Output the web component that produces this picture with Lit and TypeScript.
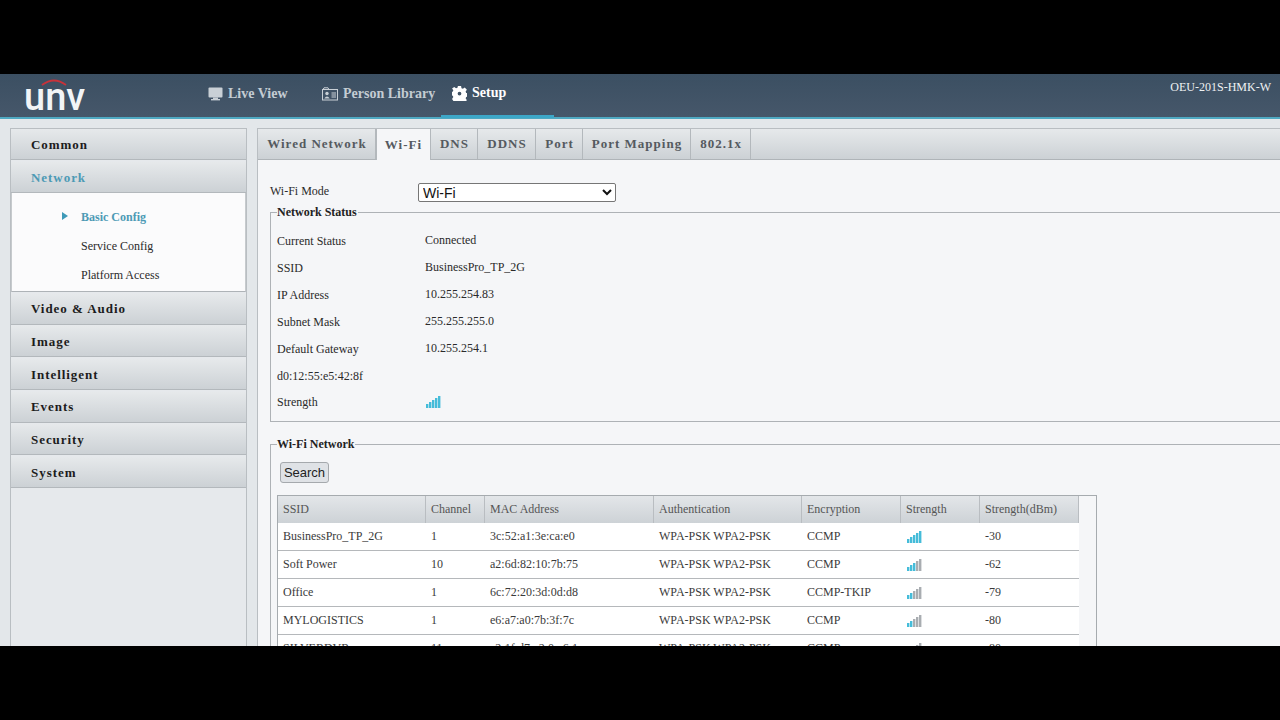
import { LitElement, html, css, svg } from "lit";
import { customElement } from "lit/decorators.js";

const SIDE_TOP = ["Common", "Network"];
const SIDE_BOTTOM = ["Video & Audio", "Image", "Intelligent", "Events", "Security", "System"];
const TABS = [
    { label: "Wired Network", width: 118 },
    { label: "Wi-Fi", width: 55, active: true },
    { label: "DNS", width: 47 },
    { label: "DDNS", width: 58 },
    { label: "Port", width: 47 },
    { label: "Port Mapping", width: 108 },
    { label: "802.1x", width: 60 },
];
const STATUS = [
    ["Current Status", "Connected"],
    ["SSID", "BusinessPro_TP_2G"],
    ["IP Address", "10.255.254.83"],
    ["Subnet Mask", "255.255.255.0"],
    ["Default Gateway", "10.255.254.1"],
    ["d0:12:55:e5:42:8f", ""],
];
const COLUMNS = ["SSID", "Channel", "MAC Address", "Authentication", "Encryption", "Strength", "Strength(dBm)"];
const NETWORKS = [
    { ssid: "BusinessPro_TP_2G", ch: "1", mac: "3c:52:a1:3e:ca:e0", enc: "CCMP", level: 5, dbm: "-30" },
    { ssid: "Soft Power", ch: "10", mac: "a2:6d:82:10:7b:75", enc: "CCMP", level: 3, dbm: "-62" },
    { ssid: "Office", ch: "1", mac: "6c:72:20:3d:0d:d8", enc: "CCMP-TKIP", level: 2, dbm: "-79" },
    { ssid: "MYLOGISTICS", ch: "1", mac: "e6:a7:a0:7b:3f:7c", enc: "CCMP", level: 2, dbm: "-80" },
    { ssid: "SILVERDVR", ch: "11", mac: "a2:1f:d7:c2:0:c6:1", enc: "CCMP", level: 2, dbm: "-80" },
];

function signal(level: number) {
    return html`<svg class="signal" width="15" height="12" viewBox="0 0 15 12">
        ${[0, 1, 2, 3, 4].map((i) => svg`<rect x=${i * 3} y=${8 - i * 2} width="2.4" height=${4 + i * 2}
            fill=${i < level ? "#45bcd9" : "#a9adb1"}></rect>`)}
    </svg>`;
}

@customElement("app-root")
export class AppRoot extends LitElement {
    static styles = css`
        :host {
            display: block;
            width: 1280px;
            height: 720px;
            background: #000;
            overflow: hidden;
            font-family: "Liberation Serif", serif;
            font-size: 12px;
            color: #2a2a2a;
        }

        .frame {
            margin-top: 74px;
            height: 572px;
            overflow: hidden;
            background: #e3e7ea;
            display: flex;
            flex-direction: column;
        }

        .topbar {
            flex: none;
            height: 43px;
            background: linear-gradient(#3b4f62, #46576a);
            border-bottom: 2px solid #4fa9c2;
            display: flex;
            position: relative;
            color: #e4e8ec;
        }

        .logo {
            width: 208px;
            flex: none;
            position: relative;
        }

        .logo span {
            position: absolute;
            left: 24px;
            top: 0;
            font: 500 38px/46px Roboto, sans-serif;
            color: #f2f4f6;
        }

        .logo svg {
            position: absolute;
            left: 41px;
            top: 4px;
        }

        .nav {
            display: flex;
            align-items: flex-start;
            font-size: 14px;
            font-weight: bold;
            color: #c4ccd3;
        }

        .nav-item {
            display: flex;
            align-items: center;
            gap: 5px;
            height: 39px;
        }

        .nav-live { width: 114px; }
        .nav-person { width: 119px; }

        .nav-setup {
            width: 113px;
            padding-left: 11px;
            gap: 5px;
            color: #fff;
            height: 44px;
            box-sizing: border-box;
            border-bottom: 3px solid #3da7c8;
            align-items: flex-start;
            padding-top: 11px;
        }

        .nav-setup svg { margin-top: 1px; }

        .device {
            position: absolute;
            right: 9px;
            top: 6px;
            font-size: 12px;
            color: #eef1f3;
        }

        .body {
            flex: 1;
            display: flex;
            gap: 10px;
            padding: 9px 0 0 10px;
            min-height: 0;
        }

        .side {
            flex: none;
            width: 235px;
            border: 1px solid #b9bec2;
            border-bottom: 0;
            background: #e6e9ec;
        }

        .side-item {
            height: 31px;
            margin-bottom: 1.7px;
            box-sizing: border-box;
            padding: 1px 0 0 20px;
            display: flex;
            align-items: center;
            background: linear-gradient(#e6e9eb, #ccd1d5);
            border-bottom: 1px solid #b3b8bc;
            font-size: 13px;
            font-weight: bold;
            letter-spacing: 0.95px;
            color: #1c1c1c;
        }

        .side-item.current {
            color: #4d9ab5;
            margin-bottom: 0;
            padding-top: 2px;
        }

        .side-panel {
            height: 99px;
            margin-bottom: 2px;
            background: #fbfbfc;
            border: 1px solid #c6cacd;
            border-top: 0;
            border-bottom-color: #aeb3b7;
            padding: 10px 0 0 69px;
            box-sizing: border-box;
        }

        .side-link {
            height: 29px;
            display: flex;
            align-items: center;
            position: relative;
        }

        .side-link.current {
            color: #4d9ab5;
            font-weight: bold;
        }

        .side-link.current::before {
            content: "";
            position: absolute;
            left: -19px;
            top: 9px;
            border-left: 6px solid #3f9ab8;
            border-top: 4px solid transparent;
            border-bottom: 4px solid transparent;
        }

        .main {
            flex: 1;
            min-width: 0;
            background: #f5f6f8;
            border-left: 1px solid #b9bec2;
            border-top: 1px solid #b9bec2;
        }

        .tabs {
            height: 31px;
            box-sizing: border-box;
            display: flex;
            background: linear-gradient(#e6e9eb, #ccd1d5);
            border-bottom: 1px solid #afb4b8;
            font-size: 13px;
            font-weight: bold;
            letter-spacing: 1px;
            color: #555a5f;
        }

        .tab {
            flex: none;
            box-sizing: border-box;
            display: flex;
            align-items: center;
            justify-content: center;
            padding-left: 1px;
            border-right: 1px solid #b3b8bc;
        }

        .tab.active {
            background: #f5f6f8;
            height: 31px;
            padding-left: 0;
            border-left: 1px solid #b3b8bc;
        }

        .content {
            padding: 23px 0 0 12px;
        }

        .mode {
            display: flex;
            align-items: center;
            height: 19px;
            margin-bottom: 3px;
        }

        .mode label { width: 148px; margin-top: -2px; }

        .mode select {
            width: 198px;
            height: 19px;
            font: 14px "Liberation Sans", sans-serif;
            background: #fff;
            border: 1px solid #767676;
            border-radius: 2px;
            color: #111;
            padding: 0 0 2px;
        }

        fieldset {
            margin: 0 -10px 0 0;
            padding: 0;
            border: 1px solid #aeb2b6;
            border-right: 0;
            min-width: 0;
        }

        legend {
            padding: 0 1px 0 0;
            font-weight: bold;
            color: #222;
            line-height: 14px;
        }

        .status {
            height: 217px;
            box-sizing: border-box;
            padding: 9px 0 0 6px;
        }

        .status-row {
            display: grid;
            grid-template-columns: 148px 1fr;
            align-items: center;
            height: 27px;
        }

        .status-row.short { height: 26px; }

        .status-row span:nth-child(2) { margin-top: -3px; }

        .network {
            margin-top: 15px;
            height: 240px;
            box-sizing: border-box;
            padding: 11px 0 0 6px;
        }

        button {
            display: block;
            margin-left: 3px;
            width: 49px;
            height: 21px;
            padding: 0;
            font: 13px "Liberation Sans", sans-serif;
            color: #222;
            background: #dfe2e6;
            border: 1px solid #a5a9ad;
            border-radius: 3px;
        }

        .table {
            width: 820px;
            margin-top: 12px;
            box-sizing: border-box;
            border: 1px solid #a6abaf;
            border-bottom: 0;
            height: 200px;
            background: #f5f6f8;
        }

        .row {
            display: grid;
            grid-template-columns: 148px 59px 169px 148px 99px 79px 99px;
            width: 801px;
            height: 28px;
            box-sizing: border-box;
            align-items: center;
            background: #fff;
            border-bottom: 1px solid #b5b8bb;
            color: #3a3a3a;
        }

        .row > * { padding-left: 5px; }

        .row.head {
            height: 27px;
            width: 100%;
            grid-template-columns: 148px 59px 169px 148px 99px 79px 99px 1fr;
            background: linear-gradient(#e3e6e9, #cdd2d6);
            border-bottom: 0;
            color: #555;
        }

        .row.head > span {
            height: 100%;
            display: flex;
            align-items: center;
            box-sizing: border-box;
            border-right: 1px solid #b9bdc1;
        }

        .row.head > .gutter { background: #f5f6f8; border: 0; }

        .signal { display: block; margin: 1px 0 0 1px; }
        .status-row .signal { margin: 0 0 0 1px; }
    `;

    render() {
        return html`
            <div class="frame">
                <header class="topbar">
                    <div class="logo">
                        <span>unv</span>
                        <svg width="26" height="8" viewBox="0 0 26 8">
                            <path d="M1 7 Q13 -2 25 7" fill="none" stroke="#c8323a" stroke-width="1.8"></path>
                        </svg>
                    </div>
                    <nav class="nav">
                        <div class="nav-item nav-live">
                            <svg width="15" height="15" viewBox="0 0 15 15">
                                <rect x="0.5" y="1.5" width="14" height="10" rx="1" fill="#c9d0d6"></rect>
                                <rect x="5" y="11.5" width="5" height="2" fill="#c9d0d6"></rect>
                                <rect x="3" y="13" width="9" height="1.4" fill="#c9d0d6"></rect>
                            </svg>
                            Live View
                        </div>
                        <div class="nav-item nav-person">
                            <svg width="16" height="14" viewBox="0 0 16 14">
                                <rect x="0.5" y="2.5" width="15" height="10.5" fill="none" stroke="#c9d0d6"></rect>
                                <path d="M1 2.5 L2 0.8 H6 L7 2.5" fill="none" stroke="#c9d0d6"></path>
                                <circle cx="5" cy="6.5" r="1.7" fill="#c9d0d6"></circle>
                                <path d="M2.3 11.5 Q5 7.5 7.7 11.5 Z" fill="#c9d0d6"></path>
                                <path d="M9.5 6 H14 M9.5 8 H14 M9.5 10 H14" stroke="#c9d0d6"></path>
                            </svg>
                            Person Library
                        </div>
                        <div class="nav-item nav-setup">
                            <svg width="15" height="15" viewBox="0 0 24 24">
                                <path fill="#fff" fill-rule="evenodd" d="M9.5 0h5l.7 3.6 2.2.9 3-2 3.400 3.400-2 3 .9 2.200 3.600.7v5l-3.600.7-.9 2.200 2 3-3.400 3.400-3-2-2.200.9-.7 3.600h-5l-.7-3.600-2.200-.9-3 2L.100 20.700l2-3-.9-2.200L-2.500 14.800v-5l3.700-.7.9-2.200-2-3L3.500 1.500l3 2 2.200-.9L9.500 0zM12 9a3 3 0 1 0 0 6 3 3 0 0 0 0-6z"></path>
                            </svg>
                            Setup
                        </div>
                    </nav>
                    <div class="device">OEU-201S-HMK-W</div>
                </header>
                <div class="body">
                    <aside class="side">
                        ${SIDE_TOP.map((s) => html`<div class="side-item ${s === "Network" ? "current" : ""}">${s}</div>`)}
                        <div class="side-panel">
                            <div class="side-link current">Basic Config</div>
                            <div class="side-link">Service Config</div>
                            <div class="side-link">Platform Access</div>
                        </div>
                        ${SIDE_BOTTOM.map((s) => html`<div class="side-item">${s}</div>`)}
                    </aside>
                    <main class="main">
                        <div class="tabs">
                            ${TABS.map((t) => html`<div class="tab ${t.active ? "active" : ""}" style="width:${t.width}px">${t.label}</div>`)}
                        </div>
                        <div class="content">
                            <div class="mode">
                                <label>Wi-Fi Mode</label>
                                <select><option>Wi-Fi</option></select>
                            </div>
                            <fieldset class="status">
                                <legend>Network Status</legend>
                                ${STATUS.map(([k, v], i) => html`<div class="status-row ${i === 5 ? "short" : ""}"><span>${k}</span><span>${v}</span></div>`)}
                                <div class="status-row short"><span>Strength</span>${signal(5)}</div>
                            </fieldset>
                            <fieldset class="network">
                                <legend>Wi-Fi Network</legend>
                                <button>Search</button>
                                <div class="table">
                                    <div class="row head">
                                        ${COLUMNS.map((c) => html`<span>${c}</span>`)}
                                        <span class="gutter"></span>
                                    </div>
                                    ${NETWORKS.map((n) => html`
                                        <div class="row">
                                            <span>${n.ssid}</span>
                                            <span>${n.ch}</span>
                                            <span>${n.mac}</span>
                                            <span>WPA-PSK WPA2-PSK</span>
                                            <span>${n.enc}</span>
                                            <span>${signal(n.level)}</span>
                                            <span>${n.dbm}</span>
                                        </div>
                                    `)}
                                </div>
                            </fieldset>
                        </div>
                    </main>
                </div>
            </div>
        `;
    }
}
